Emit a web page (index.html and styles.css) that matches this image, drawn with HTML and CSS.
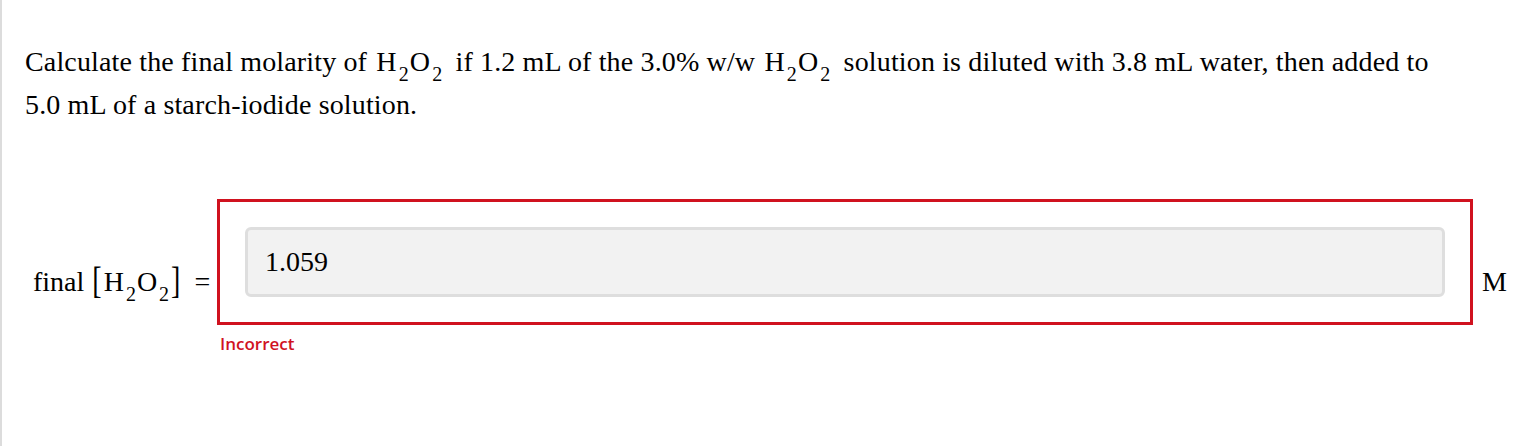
FILE: index.html
```
<!DOCTYPE html>
<html>
<head>
<meta charset="utf-8">
<link rel="stylesheet" href="styles.css">
</head>
<body>
<div class="page">
  <p class="question">Calculate the final molarity of <span class="chem">H<span class="sub">2</span>O<span class="sub">2</span></span> if 1.2 mL of the 3.0% w/w <span class="chem">H<span class="sub">2</span>O<span class="sub">2</span></span> solution is diluted with 3.8 mL water, then added to 5.0 mL of a starch-iodide solution.</p>
  <div class="answer">
    <div class="row">
      <div class="label">final <span class="br">[</span>H<span class="sub">2</span>O<span class="sub">2</span><span class="br">]</span><span class="eq">=</span></div>
      <div class="box">
        <div class="input">1.059</div>
      </div>
      <div class="unit">M</div>
    </div>
    <div class="feedback">Incorrect</div>
  </div>
</div>
</body>
</html>
```
FILE: styles.css
```
html, body {
  margin: 0;
  padding: 0;
  background: #fff;
}
.page {
  border-left: 2px solid #dcdcdc;
  height: 446px;
  box-sizing: border-box;
  padding: 40px 0 0 23px;
  font-family: "Liberation Serif", "Times New Roman", serif;
  color: #000;
}
.question {
  margin: 0;
  font-size: 28px;
  line-height: 43px;
  width: 1420px;
  letter-spacing: 0.15px;
}
.chem {
  margin-left: 2px;
  margin-right: 5px;
}
.sub {
  font-size: 20px;
  position: relative;
  top: 10px;
  line-height: 0;
  margin-left: 2px;
  margin-right: 1px;
}
.answer {
  margin-top: 73px;
}
.row {
  display: flex;
  align-items: flex-end;
}
.label, .unit {
  font-size: 28px;
  line-height: 30px;
  padding-bottom: 28px;
}
.label {
  margin-left: 8px;
  width: 184px;
  white-space: nowrap;
}
.br {
  display: inline-block;
  transform: scaleY(1.35);
  transform-origin: center 62%;
  margin: 0 2px 0 1px;
}
.eq {
  margin-left: 12px;
}
.box {
  border: 3px solid #d0121f;
  padding: 25px;
  width: 1200px;
}
.input {
  box-sizing: border-box;
  height: 70px;
  background: #f2f2f2;
  border: 3px solid #dedede;
  border-radius: 6px;
  font-size: 28px;
  padding: 17px 0 0 17px;
  line-height: 30px;
}
.unit {
  margin-left: 9px;
}
.feedback {
  margin: 7px 0 0 195px;
  font-family: "Open Sans", sans-serif;
  font-weight: 600;
  font-size: 17px;
  color: #d0121f;
}
```
